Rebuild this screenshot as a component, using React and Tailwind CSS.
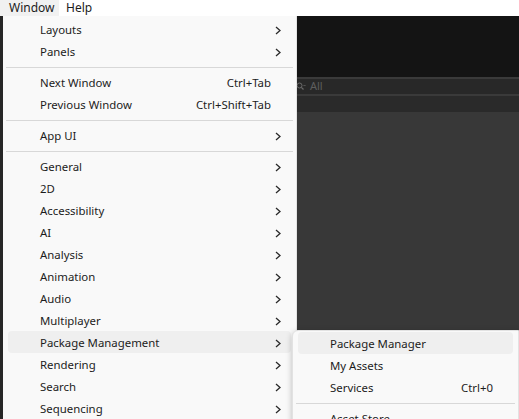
import React from "react";

const mainItems = [
    { label: "Layouts", sub: true },
    { label: "Panels", sub: true },
    { sep: true },
    { label: "Next Window", shortcut: "Ctrl+Tab" },
    { label: "Previous Window", shortcut: "Ctrl+Shift+Tab" },
    { sep: true },
    { label: "App UI", sub: true },
    { sep: true },
    { label: "General", sub: true },
    { label: "2D", sub: true },
    { label: "Accessibility", sub: true },
    { label: "AI", sub: true },
    { label: "Analysis", sub: true },
    { label: "Animation", sub: true },
    { label: "Audio", sub: true },
    { label: "Multiplayer", sub: true },
    { label: "Package Management", sub: true, active: true },
    { label: "Rendering", sub: true },
    { label: "Search", sub: true },
    { label: "Sequencing", sub: true },
];

const subItems = [
    { label: "Package Manager", active: true },
    { label: "My Assets" },
    { label: "Services", shortcut: "Ctrl+0" },
    { sep: true },
    { label: "Asset Store" },
];

function Chevron() {
    return (
        <svg width="6" height="9" viewBox="0 0 6 9" className="mt-[3px]">
            <polyline points="1,1 5,4.5 1,8" fill="none" stroke="#2a2a2a" strokeWidth="1.3" />
        </svg>
    );
}

function MenuRow({ item }) {
    if (item.sep) {
        return (
            <div className="h-[9px] pt-[5px] px-[3px]">
                <div className="h-px bg-[#d8d8d8]" />
            </div>
        );
    }
    return (
        <div
            className={`h-[22px] mx-[5px] rounded-[4px] flex items-center justify-between pl-[32px] ${
                item.shortcut ? "pr-[20px]" : "pr-[10px]"
            } ${item.active ? "bg-[#efefef]" : ""}`}
        >
            <span className="whitespace-nowrap pt-[2px]">{item.label}</span>
            {item.shortcut && <span className="whitespace-nowrap pt-[2px]">{item.shortcut}</span>}
            {item.sub && <Chevron />}
        </div>
    );
}

export default function App() {
    return (
        <div className="relative w-[519px] h-[419px] overflow-hidden flex flex-col bg-[#383838] font-['Noto_Sans',sans-serif] text-[11.4px] text-[#1c1c1c]">
            {/* menu bar */}
            <div className="h-4 bg-white flex items-center text-[12px] leading-4">
                <div className="h-4 w-[59px] bg-[#f1f1f1] pl-[9px]">Window</div>
                <div className="pl-[7px]">Help</div>
            </div>

            {/* editor background */}
            <div className="flex-1 flex">
                <div className="w-[3px] bg-[#262626]" />
                <div className="flex-1 flex flex-col">
                    <div className="h-[61px] bg-[#141414]" />
                    <div className="h-[2px] bg-[#3a3a3a]" />
                    <div className="h-[15px] bg-[#282828] flex items-center pl-[293px] gap-[4px] text-[11px] text-[#5e5e5e]">
                        <svg width="10" height="9" viewBox="0 0 10 9">
                            <circle cx="3.5" cy="3.5" r="2.5" fill="none" stroke="#6a6a6a" strokeWidth="1" />
                            <line x1="5.3" y1="5.3" x2="7.5" y2="7.5" stroke="#6a6a6a" strokeWidth="1.2" />
                            <polyline points="7.5,3 8.5,4 9.5,3" fill="none" stroke="#6a6a6a" strokeWidth="0.8" />
                        </svg>
                        <span>All</span>
                    </div>
                    <div className="h-[2px] bg-[#3a3a3a]" />
                    <div className="h-[16px] bg-[#2a2a2a]" />
                    <div className="flex-1 bg-[#383838]" />
                </div>
            </div>

            {/* Window menu */}
            <div className="absolute left-[3px] top-4 w-[294px] h-[420px] pt-[2px] bg-[#f9f9f9] border-r border-[#e4e4e4]">
                {mainItems.map((item, i) => (
                    <MenuRow key={i} item={item} />
                ))}
            </div>

            {/* Package Management submenu */}
            <div className="absolute left-[292px] top-[330px] w-[227px] h-[110px] pt-[1px] bg-[#f9f9f9] border border-[#e2e2e2] rounded-tl-[6px] shadow-[0_2px_6px_rgba(0,0,0,0.25)]">
                {subItems.map((item, i) => (
                    <MenuRow key={i} item={item} />
                ))}
            </div>
        </div>
    );
}
